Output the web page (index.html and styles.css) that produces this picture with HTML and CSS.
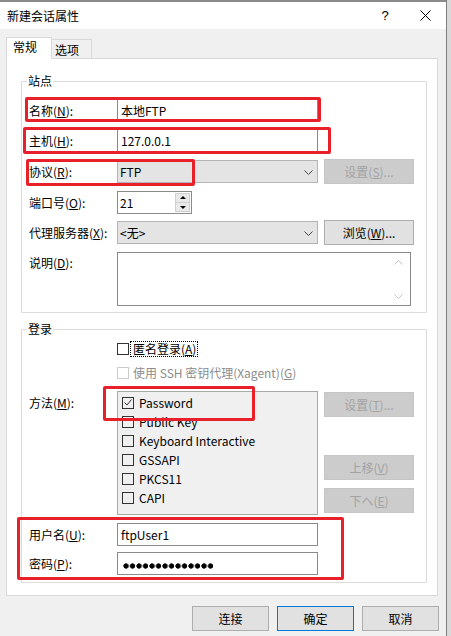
FILE: index.html
```html
<!DOCTYPE html>
<html lang="zh-CN">
<head>
    <meta charset="UTF-8">
    <meta name="viewport" content="width=device-width, initial-scale=1.0">
    <title>新建会话属性</title>
    <link rel="stylesheet" href="styles.css">
</head>
<body>
    <div class="screen">
        <div class="dialog">
            <div class="titlebar">
                <span class="title">新建会话属性</span>
                <span class="help">?</span>
                <svg class="close" width="11" height="11" viewBox="0 0 11 11">
                    <path d="M0.5 0.5 L10.5 10.5 M10.5 0.5 L0.5 10.5" stroke="#000" stroke-width="1" fill="none"/>
                </svg>
            </div>

            <div class="dialog-body">
                <div class="tabs">
                    <div class="tab active">常规</div>
                    <div class="tab">选项</div>
                </div>

                <div class="panel">
                    <!-- 站点 -->
                    <div class="group group-site">
                        <span class="group-title">站点</span>

                        <div class="row">
                            <span class="label">名称(<u>N</u>):</span>
                            <div class="input">本地FTP</div>
                        </div>

                        <div class="row row-7">
                            <span class="label">主机(<u>H</u>):</span>
                            <div class="input">127.0.0.1</div>
                        </div>

                        <div class="row row-8">
                            <span class="label">协议(<u>R</u>):</span>
                            <div class="select">
                                <span>FTP</span>
                                <svg width="9" height="5" viewBox="0 0 9 5"><polyline points="0.5,0.5 4.5,4.5 8.5,0.5" fill="none" stroke="#444" stroke-width="1"/></svg>
                            </div>
                            <div class="button disabled">设置(<u>S</u>)...</div>
                        </div>

                        <div class="row row-8">
                            <span class="label">端口号(<u>O</u>):</span>
                            <div class="spin">
                                <span class="spin-value">21</span>
                                <div class="spin-btns">
                                    <div class="spin-btn up"></div>
                                    <div class="spin-btn down"></div>
                                </div>
                            </div>
                        </div>

                        <div class="row row-7">
                            <span class="label">代理服务器(<u>X</u>):</span>
                            <div class="select">
                                <span>&lt;无&gt;</span>
                                <svg width="9" height="5" viewBox="0 0 9 5"><polyline points="0.5,0.5 4.5,4.5 8.5,0.5" fill="none" stroke="#444" stroke-width="1"/></svg>
                            </div>
                            <div class="button">浏览(<u>W</u>)...</div>
                        </div>

                        <div class="row row-desc">
                            <span class="label">说明(<u>D</u>):</span>
                            <div class="textarea">
                                <div class="scroll">
                                    <svg width="9" height="5" viewBox="0 0 9 5"><polyline points="0.5,4.5 4.5,0.5 8.5,4.5" fill="none" stroke="#c4c4c4" stroke-width="1"/></svg>
                                    <svg width="9" height="5" viewBox="0 0 9 5"><polyline points="0.5,0.5 4.5,4.5 8.5,0.5" fill="none" stroke="#c4c4c4" stroke-width="1"/></svg>
                                </div>
                            </div>
                        </div>
                    </div>

                    <!-- 登录 -->
                    <div class="group group-login">
                        <span class="group-title">登录</span>

                        <div class="check-row">
                            <span class="checkbox"></span>
                            <span class="check-label focused">匿名登录(<u>A</u>)</span>
                        </div>

                        <div class="check-row row-8">
                            <span class="checkbox disabled"></span>
                            <span class="check-label disabled">使用 SSH 密钥代理(Xagent)(<u>G</u>)</span>
                        </div>

                        <div class="row-method">
                            <span class="label">方法(<u>M</u>):</span>
                            <div class="listbox">
                                <div class="list-item">
                                    <span class="checkbox">
                                        <svg width="10" height="10" viewBox="0 0 10 10"><polyline points="1.5,4.5 4,7 8.5,1.5" fill="none" stroke="#333" stroke-width="1"/></svg>
                                    </span>
                                    Password
                                </div>
                                <div class="list-item"><span class="checkbox"></span>Public Key</div>
                                <div class="list-item"><span class="checkbox"></span>Keyboard Interactive</div>
                                <div class="list-item"><span class="checkbox"></span>GSSAPI</div>
                                <div class="list-item"><span class="checkbox"></span>PKCS11</div>
                                <div class="list-item"><span class="checkbox"></span>CAPI</div>
                            </div>
                            <div class="side-buttons">
                                <div class="button disabled">设置(<u>T</u>)...</div>
                                <div class="button disabled move-up">上移(<u>V</u>)</div>
                                <div class="button disabled move-down">下へ(<u>E</u>)</div>
                            </div>
                        </div>

                        <div class="row row-8">
                            <span class="label">用户名(<u>U</u>):</span>
                            <div class="input">ftpUser1</div>
                        </div>

                        <div class="row row-6">
                            <span class="label">密码(<u>P</u>):</span>
                            <div class="input"><span class="dots"></span></div>
                        </div>
                    </div>
                </div>

                <div class="actions">
                    <div class="button action">连接</div>
                    <div class="button action default">确定</div>
                    <div class="button action">取消</div>
                </div>
            </div>
        </div>
        <div class="backdrop"></div>

        <!-- 红色标注框 -->
        <div class="mark mark-name"></div>
        <div class="mark mark-host"></div>
        <div class="mark mark-protocol"></div>
        <div class="mark mark-method"></div>
        <div class="mark mark-login"></div>
    </div>
</body>
</html>
```

FILE: styles.css
```css
* {
    margin: 0;
    padding: 0;
    box-sizing: border-box;
}

body {
    font-family: "Noto Sans CJK SC", "Noto Sans", sans-serif;
    font-size: 12px;
    color: #000;
    background: #dadada;
    width: 451px;
    height: 636px;
    overflow: hidden;
}

u {
    text-decoration: underline;
    text-underline-offset: 1px;
}

.screen {
    position: relative;
    display: flex;
    height: 636px;
}

.dialog {
    width: 447px;
    height: 636px;
    background: #f0f0f0;
    border-right: 1px solid #7f7f7f;
    display: flex;
    flex-direction: column;
}

.backdrop {
    flex: 1;
    background: #d9d9d9;
}

/* title bar */
.titlebar {
    height: 29px;
    background: #fff;
    border-top: 2px solid #8a8a8a;
    display: flex;
    align-items: center;
    padding-left: 7px;
}

.title {
    flex: 1;
    line-height: 16px;
}

.help {
    width: 10px;
    margin-right: 30px;
    font-family: "Liberation Sans", sans-serif;
    font-size: 13px;
    text-align: center;
}

.close {
    margin-right: 15px;
}

.dialog-body {
    padding: 8px 0 0 6px;
}

/* tabs */
.tabs {
    position: relative;
    z-index: 1;
    display: flex;
    align-items: flex-end;
    height: 21px;
}

.tab {
    width: 40px;
    height: 19px;
    padding: 2px 0 0 3px;
    line-height: 16px;
    border: 1px solid #d9d9d9;
    border-left: none;
    border-bottom: none;
    background: #f0f0f0;
}

.tab.active {
    width: 46px;
    height: 22px;
    margin-bottom: -1px;
    padding: 1px 0 0 6px;
    border-left: 1px solid #d9d9d9;
    background: #fff;
}

.panel {
    width: 432px;
    height: 538px;
    background: #fff;
    border: 1px solid #d9d9d9;
    padding: 22px 0 0 14px;
}

/* group boxes */
.group {
    position: relative;
    width: 406px;
    border: 1px solid #dcdcdc;
}

.group-site {
    height: 232px;
    padding: 17px 0 0 7px;
}

.group-login {
    height: 254px;
    margin-top: 16px;
    padding: 11px 0 0 7px;
}

.group-title {
    position: absolute;
    top: -9px;
    left: 5px;
    padding: 0 1px;
    background: #fff;
    line-height: 16px;
}

.row {
    display: flex;
    align-items: center;
    height: 23px;
}

.row-6 { margin-top: 6px; }
.row-7 { margin-top: 7px; }
.row-8 { margin-top: 8px; }

.label {
    width: 88px;
    flex-shrink: 0;
    line-height: 16px;
}

.input {
    width: 201px;
    height: 23px;
    border: 1px solid #8a8a8a;
    background: #fff;
    padding-left: 3px;
    line-height: 21px;
}

.select {
    width: 201px;
    height: 23px;
    border: 1px solid #b4b4b4;
    background: #e4e4e4;
    padding: 0 4px 0 2px;
    display: flex;
    align-items: center;
    justify-content: space-between;
    line-height: 21px;
}

.select svg {
    margin-top: 1px;
}

.button {
    width: 90px;
    height: 25px;
    margin-left: 6px;
    flex-shrink: 0;
    background: #e1e1e1;
    border: 1px solid #adadad;
    text-align: center;
    line-height: 23px;
}

.button.disabled {
    background: #cccccc;
    border-color: #c6c6c6;
    color: #a3a3a3;
}

/* port spinner */
.spin {
    width: 75px;
    height: 23px;
    border: 1px solid #8a8a8a;
    background: #fff;
    display: flex;
    align-items: center;
}

.spin-value {
    flex: 1;
    padding-left: 2px;
    line-height: 21px;
}

.spin-btns {
    width: 15px;
    margin-right: 1px;
    display: flex;
    flex-direction: column;
}

.spin-btn {
    position: relative;
    height: 10px;
    background: #e9e9e9;
    border: 1px solid #cfcfcf;
}

.spin-btn.down {
    margin-top: -1px;
}

.spin-btn::before {
    content: "";
    position: absolute;
    left: 4px;
    top: 2px;
    border-left: 3px solid transparent;
    border-right: 3px solid transparent;
}

.spin-btn.up::before {
    border-bottom: 3px solid #000;
}

.spin-btn.down::before {
    top: 3px;
    border-top: 3px solid #000;
}

/* description */
.row-desc {
    display: flex;
    align-items: flex-start;
    margin-top: 8px;
}

.row-desc .label {
    margin-top: 3px;
}

.textarea {
    width: 294px;
    height: 54px;
    border: 1px solid #8a8a8a;
    background: #fff;
    display: flex;
    justify-content: flex-end;
}

.scroll {
    width: 17px;
    padding: 7px 0 6px 1px;
    display: flex;
    flex-direction: column;
    justify-content: space-between;
}

/* login checkboxes */
.check-row {
    display: flex;
    align-items: center;
    height: 16px;
    padding-left: 88px;
}

.checkbox {
    width: 12px;
    height: 12px;
    flex-shrink: 0;
    border: 1px solid #333;
    background: #fff;
    display: flex;
    align-items: center;
    justify-content: center;
}

.checkbox.disabled {
    border-color: #cccccc;
}

.check-label {
    margin-left: 1px;
    padding: 0 1px 0 2px;
    border: 1px dotted transparent;
    line-height: 14px;
}

.check-label.focused {
    border-color: #000;
}

.check-label.disabled {
    color: #8c8c8c;
}

/* authentication method list */
.row-method {
    display: flex;
    align-items: flex-start;
    height: 124px;
    margin-top: 10px;
}

.row-method .label {
    margin-top: 4px;
}

.listbox {
    width: 201px;
    height: 124px;
    border: 1px solid #a9a9a9;
    background: #f0f0f0;
    padding: 1px 0 0 4px;
}

.list-item {
    display: flex;
    align-items: center;
    gap: 5px;
    height: 19px;
    line-height: 16px;
}

.list-item .checkbox {
    background: transparent;
}

.side-buttons {
    display: flex;
    flex-direction: column;
    padding-top: 1px;
}

.side-buttons .move-up {
    margin-top: 38px;
}

.side-buttons .move-down {
    margin-top: 8px;
}

.dots {
    display: inline-block;
    width: 91px;
    height: 6px;
    margin-left: 2px;
    vertical-align: middle;
    background: radial-gradient(circle at 3px 3px, #000 2.4px, transparent 2.9px);
    background-size: 6.5px 6px;
}

/* bottom buttons */
.actions {
    display: flex;
    justify-content: flex-end;
    gap: 8px;
    margin-top: 10px;
    padding-right: 7px;
}

.button.action {
    width: 77px;
    margin-left: 0;
}

.button.default {
    border-color: #0078d7;
}

/* red annotation frames */
.mark {
    position: absolute;
    border: 3px solid #e8202a;
    border-radius: 2px;
}

.mark-name { left: 25px; top: 97px; width: 296px; height: 25px; }
.mark-host { left: 23px; top: 127px; width: 308px; height: 27px; }
.mark-protocol { left: 26px; top: 159px; width: 169px; height: 27px; }
.mark-method { left: 103px; top: 386px; width: 152px; height: 35px; }
.mark-login { left: 17px; top: 517px; width: 327px; height: 63px; }
```
